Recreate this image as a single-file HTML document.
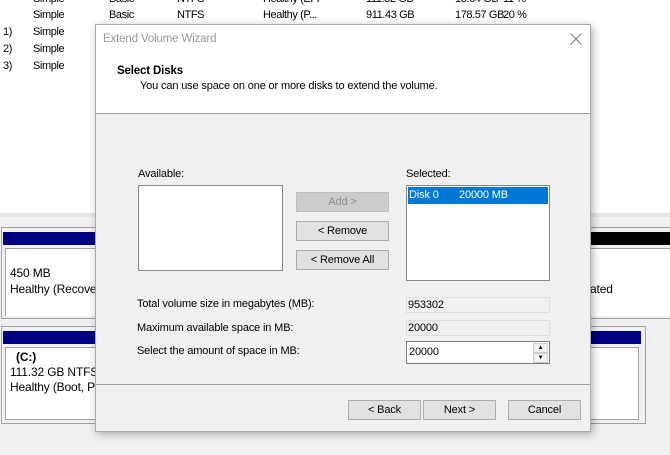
<!DOCTYPE html>
<html><head><meta charset="utf-8"><style>
*{margin:0;padding:0;box-sizing:border-box}
body{width:670px;height:455px;overflow:hidden;background:#f0f0f0;font-family:"Liberation Sans",sans-serif;font-size:11px;letter-spacing:-0.15px;color:#000;position:relative}
.a{position:absolute;white-space:nowrap}
.t{letter-spacing:-0.4px}
.btn{position:absolute;background:#e1e1e1;border:1px solid #adadad;text-align:center;line-height:18px;font-size:11px}
</style></head><body>
<div class="a" style="left:0;top:0;width:670px;height:213px;background:#fff"></div>
<div class="a" style="left:0;top:213px;width:670px;height:4px;background:#e6e6e6"></div>
<div class="a t" style="left:33px;top:-7px">Simple</div><div class="a t" style="left:109px;top:-7px">Basic</div><div class="a t" style="left:177px;top:-7px">NTFS</div><div class="a t" style="left:263px;top:-7px">Healthy (EFI</div><div class="a t" style="left:366px;top:-7px">111.32 GB</div><div class="a t" style="left:455px;top:-7px">13.64 GB</div><div class="a t" style="left:503px;top:-7px">11 %</div>
<div class="a t" style="left:33px;top:9px">Simple</div><div class="a t" style="left:109px;top:9px">Basic</div><div class="a t" style="left:177px;top:9px">NTFS</div><div class="a t" style="left:263px;top:9px">Healthy (P...</div><div class="a t" style="left:366px;top:9px">911.43 GB</div><div class="a t" style="left:455px;top:9px">178.57 GB</div><div class="a t" style="left:503px;top:9px">20 %</div>
<div class="a t" style="left:3px;top:26px">1)</div><div class="a t" style="left:33px;top:26px">Simple</div>
<div class="a t" style="left:3px;top:43px">2)</div><div class="a t" style="left:33px;top:43px">Simple</div>
<div class="a t" style="left:3px;top:60px">3)</div><div class="a t" style="left:33px;top:60px">Simple</div>
<div class="a" style="left:1px;top:227px;width:669px;height:92px;border:1px solid #a0a0a0;border-right:none;background:#f0f0f0"></div>
<div class="a" style="left:3px;top:232px;width:667px;height:13px;background:#000"></div>
<div class="a" style="left:3px;top:232px;width:300px;height:13px;background:#000080"></div>
<div class="a" style="left:5px;top:248px;width:665px;height:68px;background:#fff;border-left:1px solid #a0a0a0;border-top:1px solid #a0a0a0"></div>
<div class="a" style="left:10px;top:266px;font-size:12px">450 MB</div>
<div class="a" style="left:10px;top:282px;font-size:12px">Healthy (Recovery Partition)</div>
<div class="a" style="left:590px;top:282px;font-size:12px">ated</div>
<div class="a" style="left:1px;top:326px;width:645px;height:98px;border:1px solid #a0a0a0;background:#f0f0f0"></div>
<div class="a" style="left:3px;top:331px;width:638px;height:13px;background:#000080"></div>
<div class="a" style="left:5px;top:347px;width:634px;height:73px;background:#fff;border:1px solid #a0a0a0"></div>
<div class="a" style="left:16px;top:350px;font-weight:bold;font-size:12px">(C:)</div>
<div class="a" style="left:10px;top:365px;font-size:12px">111.32 GB NTFS</div>
<div class="a" style="left:10px;top:380px;font-size:12px">Healthy (Boot, Page File)</div>
<div class="a" style="left:95px;top:24px;width:496px;height:408px;background:#f0f0f0;border:1px solid #aaa;box-shadow:2px 2px 8px rgba(0,0,0,.3)">
 <div class="a" style="left:0;top:0;width:494px;height:89px;background:#fff;border-bottom:1px solid #a0a0a0"></div>
 <div class="a" style="left:7px;top:8px;color:#999;font-size:11.5px">Extend Volume Wizard</div>
 <svg class="a" style="left:474px;top:8px" width="12" height="12" viewBox="0 0 12 12"><path d="M0.5 0.5L11.5 11.5M11.5 0.5L0.5 11.5" stroke="#777" stroke-width="1"/></svg>
 <div class="a" style="left:21px;top:40px;font-weight:bold;font-size:11.5px">Select Disks</div>
 <div class="a" style="left:44px;top:55px">You can use space on one or more disks to extend the volume.</div>
 <div class="a" style="left:42px;top:143px">Available:</div>
 <div class="a" style="left:42px;top:160px;width:145px;height:86px;background:#fff;border:1px solid #828790"></div>
 <div class="a" style="left:310px;top:143px">Selected:</div>
 <div class="a" style="left:310px;top:160px;width:144px;height:96px;background:#fff;border:1px solid #828790">
  <div class="a" style="left:1px;top:1px;width:140px;height:17px;background:#0078d7;color:#fff;line-height:17px;padding-left:1px">Disk 0&nbsp;&nbsp;&nbsp;&nbsp;&nbsp;&nbsp;&nbsp;20000 MB</div>
 </div>
 <div class="btn" style="left:200px;top:167px;width:93px;height:20px;background:#cccccc;border-color:#bfbfbf;color:#8d8d8d">Add &gt;</div>
 <div class="btn" style="left:200px;top:196px;width:93px;height:20px">&lt; Remove</div>
 <div class="btn" style="left:200px;top:225px;width:93px;height:20px">&lt; Remove All</div>
 <div class="a" style="left:41px;top:273px">Total volume size in megabytes (MB):</div>
 <div class="a" style="left:310px;top:272px;width:144px;height:16px;border:1px solid #ddd;background:#f0f0f0;line-height:14px;padding-left:1px">953302</div>
 <div class="a" style="left:41px;top:297px">Maximum available space in MB:</div>
 <div class="a" style="left:310px;top:295px;width:144px;height:16px;border:1px solid #ddd;background:#f0f0f0;line-height:14px;padding-left:1px">20000</div>
 <div class="a" style="left:41px;top:320px">Select the amount of space in MB:</div>
 <div class="a" style="left:310px;top:316px;width:144px;height:23px;border:1px solid #7a7a7a;background:#fff;line-height:20px;padding-left:2px">20000
  <div class="a" style="left:126px;top:1px;width:15px;height:10px;background:#f0f0f0;border:1px solid #ccc;font-size:6px;line-height:8px;text-align:center">▲</div>
  <div class="a" style="left:126px;top:11px;width:15px;height:10px;background:#f0f0f0;border:1px solid #ccc;font-size:6px;line-height:8px;text-align:center">▼</div>
 </div>
 <div class="a" style="left:0;top:359px;width:494px;height:1px;background:#a0a0a0"></div>
 <div class="btn" style="left:252px;top:375px;width:73px;height:20px">&lt; Back</div>
 <div class="btn" style="left:327px;top:375px;width:73px;height:20px">Next &gt;</div>
 <div class="btn" style="left:412px;top:375px;width:73px;height:20px">Cancel</div>
</div>
</body></html>
